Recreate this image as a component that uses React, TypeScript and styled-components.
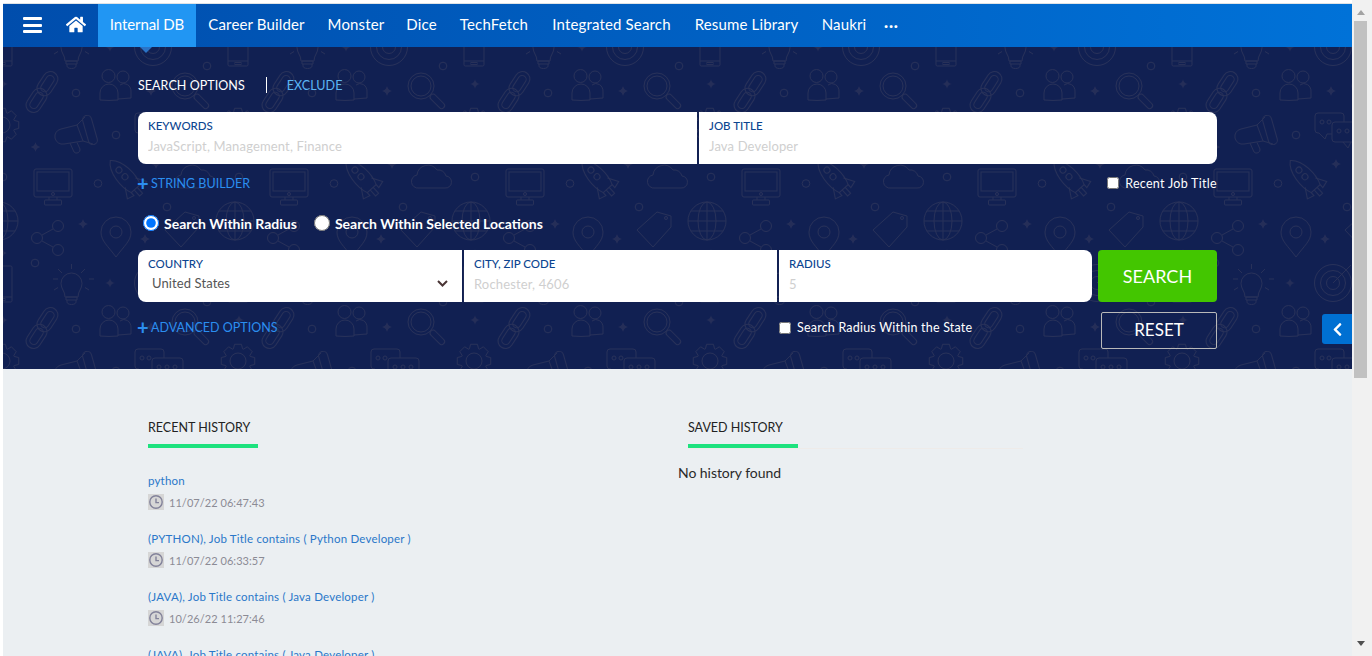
import React from "react";
import styled, { createGlobalStyle } from "styled-components";
import { FaHome, FaChevronLeft } from "react-icons/fa";

const GlobalStyle = createGlobalStyle`
  html, body {
    margin: 0;
    height: 100%;
    overflow: hidden;
    background: #ffffff;
    font-family: "Lato", "Liberation Sans", sans-serif;
  }
  * {
    box-sizing: border-box;
  }
`;

const Frame = styled.div`
  display: flex;
  width: 1372px;
  height: 656px;
  overflow: hidden;
`;

const Page = styled.div`
  flex: 1;
  margin: 3px 0 0 3px;
  border-top: 1px solid #dfe3e6;
  background: #ebeff2;
  overflow: hidden;
  min-width: 0;
`;

const Scrollbar = styled.div`
  width: 20px;
  padding: 3px 5px 0 2px;
  background: #f1f1f1;
  display: flex;
  flex-direction: column;
  align-items: center;
  height: 100%;
`;

const ScrollArrow = styled.div<{ $down?: boolean }>`
  width: 0;
  height: 0;
  margin: ${p => (p.$down ? "auto 0 10px" : "7px 0 6px")};
  border-left: 4px solid transparent;
  border-right: 4px solid transparent;
  ${p =>
    p.$down
      ? "border-top: 5px solid #505050;"
      : "border-bottom: 5px solid #a3a3a3;"}
`;

const ScrollThumb = styled.div`
  width: 13px;
  height: 357px;
  background: #c1c1c1;
`;

const NavBar = styled.nav`
  display: flex;
  align-items: stretch;
  height: 43px;
  padding-left: 20px;
  background: linear-gradient(90deg, #004dac 0%, #0072d8 100%);
`;

const MenuButton = styled.button`
  width: 19px;
  margin-right: 24px;
  padding: 0 0 1px;
  border: none;
  background: none;
  display: flex;
  flex-direction: column;
  justify-content: center;
  align-items: center;
  gap: 3.5px;
`;

const MenuBar = styled.span`
  width: 19px;
  height: 3px;
  border-radius: 1px;
  background: #ffffff;
`;

const HomeLink = styled.a`
  width: 20px;
  margin-right: 12px;
  padding-bottom: 2px;
  color: #ffffff;
  font-size: 21px;
  display: flex;
  align-items: center;
  justify-content: center;
`;

const NavItem = styled.a<{ $active?: boolean; $width: number }>`
  position: relative;
  flex: none;
  width: ${p => p.$width}px;
  padding-bottom: 3px;
  display: flex;
  align-items: center;
  justify-content: center;
  color: #ffffff;
  font-size: 15px;
  letter-spacing: ${p => (p.$active ? "-0.1px" : "0.15px")};
  white-space: nowrap;
  background: ${p => (p.$active ? "#2196f3" : "transparent")};

  ${p =>
    p.$active &&
    `&::after {
      content: "";
      position: absolute;
      left: 42px;
      top: 43px;
      border-left: 6px solid transparent;
      border-right: 6px solid transparent;
      border-top: 6px solid #2a73c6;
      z-index: 2;
    }`}
`;

const NavMore = styled.span`
  color: #ffffff;
  font-size: 15px;
  font-weight: 700;
  letter-spacing: 0.8px;
  align-self: center;
  margin: 0 0 1px 6px;
`;

const Hero = styled.section`
  position: relative;
  height: 322px;
  background: #112052;
  overflow: hidden;
`;

const HeroPattern = styled.svg`
  position: absolute;
  inset: 0;
  width: 100%;
  height: 100%;
`;

const HeroForm = styled.form`
  position: relative;
  z-index: 1;
  width: 1079px;
  margin-left: 135px;
  padding-top: 30px;
`;

const TabRow = styled.div`
  display: flex;
  align-items: center;
  height: 16px;
  margin-bottom: 19px;
`;

const TabLabel = styled.span<{ $active?: boolean }>`
  font-size: 12.5px;
  letter-spacing: 0.05px;
  white-space: nowrap;
  color: ${p => (p.$active ? "#ffffff" : "#5db6f5")};
`;

const TabDivider = styled.span`
  width: 1px;
  height: 16px;
  margin: 0 20px 0 21px;
  background: #ffffff;
`;

const FieldRow = styled.div`
  display: flex;
  gap: 2px;
  height: 52px;
`;

const Field = styled.label<{ $width: number }>`
  width: ${p => p.$width}px;
  flex: none;
  display: block;
  padding: 7px 10px 0;
  background: #ffffff;
  &:first-child {
    border-radius: 8px 0 0 8px;
  }
  &:last-child {
    border-radius: 0 8px 8px 0;
  }
`;

const FieldLabel = styled.span`
  display: block;
  height: 13px;
  line-height: 13px;
  font-size: 11.5px;
  font-weight: 500;
  color: #0c4590;
`;

const FieldInput = styled.input`
  display: block;
  width: 100%;
  height: 18px;
  margin-top: 5px;
  padding: 0;
  border: none;
  outline: none;
  background: transparent;
  font-family: "Lato", "Liberation Sans", sans-serif;
  font-size: 13px;
  letter-spacing: 0.15px;

  &::placeholder {
    color: #cfcfcf;
    opacity: 1;
  }
`;

const SelectValue = styled.div`
  display: flex;
  align-items: center;
  justify-content: space-between;
  height: 18px;
  margin-top: 4px;
  padding: 0 4px;
  font-size: 13px;
  letter-spacing: 0.1px;
  color: #555555;
`;

const OptionRow = styled.div<{ $height: number }>`
  display: flex;
  align-items: center;
  justify-content: space-between;
  height: ${p => p.$height}px;
`;

const TextLink = styled.a`
  display: flex;
  align-items: center;
  color: #2b8ef0;
  font-size: 12.5px;
  white-space: nowrap;
`;

const PlusMark = styled.span`
  font-size: 20px;
  font-weight: 700;
  line-height: 1;
  width: 14px;
  margin-left: -1px;
`;

const CheckLabel = styled.label`
  display: flex;
  align-items: center;
  gap: 6px;
  color: #ffffff;
  font-size: 12.5px;
  letter-spacing: 0.3px;
  white-space: nowrap;
`;

const CheckInput = styled.input`
  width: 12px;
  height: 12px;
  margin: 0;
`;

const RadioRow = styled.div`
  display: flex;
  align-items: center;
  gap: 17px;
  height: 24px;
  margin: 9px 0 15px 5px;
`;

const RadioLabel = styled.label`
  display: flex;
  align-items: center;
  gap: 5px;
  color: #ffffff;
  font-size: 14px;
  font-weight: 700;
  letter-spacing: 0;
  white-space: nowrap;
`;

const RadioInput = styled.input`
  width: 16px;
  height: 16px;
  margin: 0;
`;

const SearchLine = styled.div`
  display: flex;
  gap: 6px;
`;

const SearchButton = styled.button`
  width: 119px;
  height: 52px;
  padding: 0 0 1px;
  border: none;
  border-radius: 4px;
  background: #43c600;
  color: #ffffff;
  font-family: "Lato", "Liberation Sans", sans-serif;
  font-size: 18px;
`;

const BottomRow = styled.div`
  display: flex;
  align-items: flex-start;
  margin-top: 10px;
`;

const AdvancedLink = styled(TextLink)`
  width: 641px;
  margin-top: 5px;
`;

const StateCheck = styled(CheckLabel)`
  width: 322px;
  margin-top: 8px;
  letter-spacing: 0.2px;
`;

const ResetButton = styled.button`
  width: 116px;
  height: 37px;
  padding: 0 0 2px;
  border: 1px solid #b9b9b9;
  border-radius: 2px;
  background: transparent;
  color: #ffffff;
  font-family: "Lato", "Liberation Sans", sans-serif;
  font-size: 17px;
`;

const SideToggle = styled.button`
  position: absolute;
  z-index: 1;
  right: 0;
  top: 267px;
  width: 30px;
  height: 30px;
  padding: 0;
  border: none;
  border-radius: 3px 0 0 3px;
  background: #0070d2;
  color: #ffffff;
  font-size: 15px;
  display: flex;
  align-items: center;
  justify-content: center;
`;

const HistoryGrid = styled.section`
  display: grid;
  grid-template-columns: 530px 1fr;
  padding: 50px 0 0 145px;
`;

const HistoryColumn = styled.div``;

const HistoryHeader = styled.div<{ $indent?: number }>`
  display: flex;
  margin-left: ${p => p.$indent ?? 0}px;
  height: 30px;
  border-bottom: 1px solid ${p => (p.$indent ? "#eeebe9" : "transparent")};
  width: ${p => (p.$indent ? "335px" : "auto")};
`;

const HistoryTitle = styled.div`
  width: 110px;
  height: 29px;
  line-height: 18px;
  font-size: 12.5px;
  color: #222222;
  white-space: nowrap;
  border-bottom: 4px solid #1de27e;
`;

const EmptyNote = styled.p`
  margin: 15px 0 0;
  font-size: 14px;
  line-height: 18px;
  letter-spacing: -0.05px;
  color: #2a2a2a;
`;

const HistoryList = styled.div`
  margin-top: 24px;
`;

const HistoryItem = styled.div`
  height: 58px;
`;

const HistoryLink = styled.a`
  display: block;
  height: 16px;
  line-height: 16px;
  font-size: 11.5px;
  letter-spacing: 0.2px;
  color: #2a77c9;
  white-space: nowrap;
`;

const HistoryMeta = styled.div`
  display: flex;
  align-items: center;
  gap: 5px;
  margin-top: 5px;
  height: 16px;
  font-size: 11px;
  letter-spacing: 0.05px;
  color: #8b8b95;
`;

const ClockBox = styled.svg`
  width: 16px;
  height: 16px;
  flex: none;
  background: #d6d6d6;
`;

const sparkle = (x: number, y: number, r: number) =>
  `M${x} ${y - r}Q${x + 0.8} ${y - 0.8} ${x + r} ${y}Q${x + 0.8} ${y + 0.8} ${x} ${y + r}Q${x - 0.8} ${y + 0.8} ${x - r} ${y}Q${x - 0.8} ${y - 0.8} ${x} ${y - r}Z`;

const gearPath = (cx: number, cy: number) => {
  const points: string[] = [];
  for (let i = 0; i < 8; i++) {
    const a = (i * Math.PI) / 4;
    [
      [13, -0.36],
      [17, -0.2],
      [17, 0.2],
      [13, 0.36],
    ].forEach(([r, d]) => {
      points.push(
        `${(cx + r * Math.cos(a + d)).toFixed(1)} ${(cy + r * Math.sin(a + d)).toFixed(1)}`
      );
    });
  }
  return `M${points.join("L")}Z`;
};

const dots = [
  [73, 46],
  [113, 88],
  [95, 136.5],
  [0, 130],
  [164, 160],
  [204, 19],
  [32, 216],
];

const stars = [
  [0, 37, 4.5],
  [148, 44, 4.5],
  [32.5, 100, 4.5],
  [153, 117, 4.5],
  [80, 177, 4.5],
  [142, 192, 4.5],
  [107, 0, 4.5],
  [0, 206, 3.5],
];

const PatternIcons = () => (
  <g id="tile-icons">
    {/* bulb */}
    <path d="M62 250C62 244 58 242 58 236.5A10.5 10.5 0 1 1 79 236.5C79 242 75 244 75 250Z" />
    <path d="M63 250h11v3h-11zM64 253v1.5a4.5 3 0 0 0 9 0V253" />
    <path d="M68.5 217v5M55 222l4 4M82 222l-4 4M50 232h5M86 232h5M51 243l4-2.5M86 243l-4-2.5" />
    {/* link */}
    <g transform="rotate(33 39 45)">
      <rect x="31.5" y="22" width="15" height="26" rx="7.5" />
      <rect x="35" y="26" width="8" height="18" rx="4" />
      <rect x="31.5" y="42" width="15" height="26" rx="7.5" />
      <rect x="35" y="46" width="8" height="18" rx="4" />
    </g>
    {/* people */}
    <circle cx="105.5" cy="29" r="6.5" />
    <circle cx="120" cy="30" r="6" />
    <path d="M97 53V46a9 9 0 0 1 18 0V53Q106 54 97 53Z" />
    <path d="M115 52L128 51V45a7 8 0 0 0-11-7" />
    {/* gear */}
    <path d={gearPath(235, 78)} />
    <circle cx="235" cy="78" r="8" />
    {/* megaphone */}
    <rect x="82.5" y="68" width="9" height="30" rx="4.5" transform="rotate(-16 87 83)" />
    <path d="M82 70L74 78L58 82A7.5 7.5 0 0 0 61 97L80 94L90 97" />
    <path d="M74 78L80 94M67 96L71 105a3.5 3.5 0 0 0 6-3L74 95.5" />
    {/* monitor */}
    <rect x="31" y="122" width="38" height="28" rx="2" />
    <rect x="34" y="125" width="32" height="19" />
    <circle cx="50" cy="147" r="1.5" />
    <path d="M46 150v3M54 150v3" />
    <rect x="41.5" y="153" width="17" height="5" rx="1" />
    {/* rocket */}
    <g transform="translate(124 132) rotate(-42)">
      <path d="M0-25C10-17 10 3 6 13H-6C-10 3-10-17 0-25Z" />
      <circle cx="0" cy="-12" r="3" />
      <circle cx="0" cy="-3" r="3" />
      <path d="M-7 5L-13 15L-6 17V13M7 5L13 15L6 17V13M-2 13v8h4v-8" />
    </g>
    {/* lens */}
    <circle cx="182" cy="39" r="13" />
    <circle cx="182" cy="39" r="10" />
    <rect x="192" y="45" width="18" height="6" rx="3" transform="rotate(45 192 48)" />
    {/* cloud */}
    <path d="M180 141a6.5 6.5 0 0 1-2-13a11 11 0 0 1 20-5a8 8 0 0 1 9 6a6 6 0 0 1-1 12Z" />
    {/* globe */}
    <circle cx="232" cy="174" r="19" />
    <ellipse cx="232" cy="174" rx="9" ry="19" />
    <path d="M232 155v38M213 174h38M216 164h32M216 184h32" />
    {/* tag */}
    <path d="M182 165L196 169V180L178 200L162 183Z" />
    <circle cx="191" cy="171" r="1.5" />
    {/* share */}
    <circle cx="55" cy="179" r="5.5" />
    <circle cx="34" cy="191" r="5.5" />
    <circle cx="55" cy="203" r="5.5" />
    <path d="M39 188L50 182M39 194L50 200" />
    {/* pin */}
    <path d="M113 210C105 199 98 194 98 185A15 15 0 1 1 128 185C128 194 121 199 113 210Z" />
    <circle cx="113" cy="185" r="6" />
    {/* target */}
    <circle cx="150" cy="0" r="18.5" />
    <circle cx="150" cy="0" r="12.5" />
    <circle cx="150" cy="0" r="6.5" />
    <path d="M150 0L168-18" />
    {/* phone */}
    <rect x="225" y="219" width="20" height="36" rx="1.5" />
    <path d="M225 250h20" />
    <rect x="232" y="251.5" width="6" height="2" />
    {/* chat */}
    <path d="M149 87H144L142 92L136 86H135a3 3 0 0 1-3-3V69a3 3 0 0 1 3-3H158a3 3 0 0 1 3 3V75" />
    <circle cx="139" cy="75" r="2" />
    <circle cx="146" cy="75" r="2" />
    <rect x="149" y="75" width="31" height="20" rx="3" />
    <path d="M160 95L165 101L168 95" />
    <circle cx="156" cy="84" r="2" />
    <circle cx="164" cy="84" r="2" />
    <circle cx="172" cy="84" r="2" />
    {dots.map(([x, y]) => (
      <circle key={`${x}-${y}`} cx={x} cy={y} r="3.8" />
    ))}
  </g>
);

const Pattern = () => (
  <HeroPattern aria-hidden="true">
    <defs>
      <pattern id="hero-tile" width="236" height="236" patternUnits="userSpaceOnUse">
        <g fill="none" stroke="#283159" strokeWidth="1">
          <PatternIcons />
          {[-236, 0, 236].map(dx =>
            [-236, 0, 236].map(dy =>
              dx === 0 && dy === 0 ? null : (
                <use key={`${dx}/${dy}`} href="#tile-icons" x={dx} y={dy} />
              )
            )
          )}
        </g>
        <g fill="#252e58">
          {stars.map(([x, y, r]) => (
            <path key={`${x}-${y}`} d={sparkle(x, y, r)} />
          ))}
          {stars.map(([x, y, r]) => (
            <path key={`w${x}-${y}`} d={sparkle(x === 0 ? 236 : x, y === 0 ? 236 : y, r)} />
          ))}
        </g>
      </pattern>
    </defs>
    <rect width="100%" height="100%" fill="url(#hero-tile)" />
  </HeroPattern>
);

const navItems = [
  { label: "Career Builder", width: 121 },
  { label: "Monster", width: 78 },
  { label: "Dice", width: 53 },
  { label: "TechFetch", width: 92 },
  { label: "Integrated Search", width: 143 },
  { label: "Resume Library", width: 127 },
  { label: "Naukri", width: 68 },
];

const history = [
  { query: "python", date: "11/07/22 06:47:43" },
  { query: "(PYTHON), Job Title contains ( Python Developer )", date: "11/07/22 06:33:57" },
  { query: "(JAVA), Job Title contains ( Java Developer )", date: "10/26/22 11:27:46" },
  { query: "(JAVA), Job Title contains ( Java Developer )", date: "10/26/22 11:20:12" },
];

const ClockIcon = () => (
  <ClockBox viewBox="0 0 16 16" fill="none" stroke="#82829a" strokeWidth="1.4">
    <circle cx="8" cy="8" r="6.2" />
    <path d="M8 4.6V8.6H11" />
  </ClockBox>
);

const App: React.FC = () => {
  return (
    <Frame>
      <GlobalStyle />
      <Page>
        <NavBar>
          <MenuButton type="button" aria-label="Menu">
            <MenuBar />
            <MenuBar />
            <MenuBar />
          </MenuButton>
          <HomeLink aria-label="Home">
            <FaHome />
          </HomeLink>
          <NavItem $active $width={98}>
            Internal DB
          </NavItem>
          {navItems.map(item => (
            <NavItem key={item.label} $width={item.width}>
              {item.label}
            </NavItem>
          ))}
          <NavMore>···</NavMore>
        </NavBar>
        <Hero>
          <Pattern />
          <HeroForm onSubmit={event => event.preventDefault()}>
            <TabRow>
              <TabLabel $active>SEARCH OPTIONS</TabLabel>
              <TabDivider />
              <TabLabel>EXCLUDE</TabLabel>
            </TabRow>
            <FieldRow>
              <Field $width={559}>
                <FieldLabel>KEYWORDS</FieldLabel>
                <FieldInput type="text" placeholder="JavaScript, Management, Finance" />
              </Field>
              <Field $width={518}>
                <FieldLabel>JOB TITLE</FieldLabel>
                <FieldInput type="text" placeholder="Java Developer" />
              </Field>
            </FieldRow>
            <OptionRow $height={38}>
              <TextLink>
                <PlusMark>+</PlusMark>STRING BUILDER
              </TextLink>
              <CheckLabel>
                <CheckInput type="checkbox" />
                Recent Job Title
              </CheckLabel>
            </OptionRow>
            <RadioRow>
              <RadioLabel>
                <RadioInput type="radio" name="scope" defaultChecked />
                Search Within Radius
              </RadioLabel>
              <RadioLabel>
                <RadioInput type="radio" name="scope" />
                Search Within Selected Locations
              </RadioLabel>
            </RadioRow>
            <SearchLine>
              <FieldRow>
                <Field $width={324}>
                  <FieldLabel>COUNTRY</FieldLabel>
                  <SelectValue>
                    United States
                    <svg width="11" height="7" viewBox="0 0 11 7" fill="none" stroke="#4a3535" strokeWidth="2">
                      <path d="M1 1L5.5 5.5L10 1" />
                    </svg>
                  </SelectValue>
                </Field>
                <Field $width={313}>
                  <FieldLabel>CITY, ZIP CODE</FieldLabel>
                  <FieldInput type="text" placeholder="Rochester, 4606" />
                </Field>
                <Field $width={313}>
                  <FieldLabel>RADIUS</FieldLabel>
                  <FieldInput type="text" placeholder="5" />
                </Field>
              </FieldRow>
              <SearchButton type="submit">SEARCH</SearchButton>
            </SearchLine>
            <BottomRow>
              <AdvancedLink>
                <PlusMark>+</PlusMark>ADVANCED OPTIONS
              </AdvancedLink>
              <StateCheck>
                <CheckInput type="checkbox" />
                Search Radius Within the State
              </StateCheck>
              <ResetButton type="reset">RESET</ResetButton>
            </BottomRow>
          </HeroForm>
          <SideToggle type="button" aria-label="Collapse">
            <FaChevronLeft />
          </SideToggle>
        </Hero>
        <HistoryGrid>
          <HistoryColumn>
            <HistoryHeader>
              <HistoryTitle>RECENT HISTORY</HistoryTitle>
            </HistoryHeader>
            <HistoryList>
              {history.map(item => (
                <HistoryItem key={item.date}>
                  <HistoryLink>{item.query}</HistoryLink>
                  <HistoryMeta>
                    <ClockIcon />
                    {item.date}
                  </HistoryMeta>
                </HistoryItem>
              ))}
            </HistoryList>
          </HistoryColumn>
          <HistoryColumn>
            <HistoryHeader $indent={10}>
              <HistoryTitle>SAVED HISTORY</HistoryTitle>
            </HistoryHeader>
            <EmptyNote>No history found</EmptyNote>
          </HistoryColumn>
        </HistoryGrid>
      </Page>
      <Scrollbar>
        <ScrollArrow />
        <ScrollThumb />
        <ScrollArrow $down />
      </Scrollbar>
    </Frame>
  );
};

export default App;
